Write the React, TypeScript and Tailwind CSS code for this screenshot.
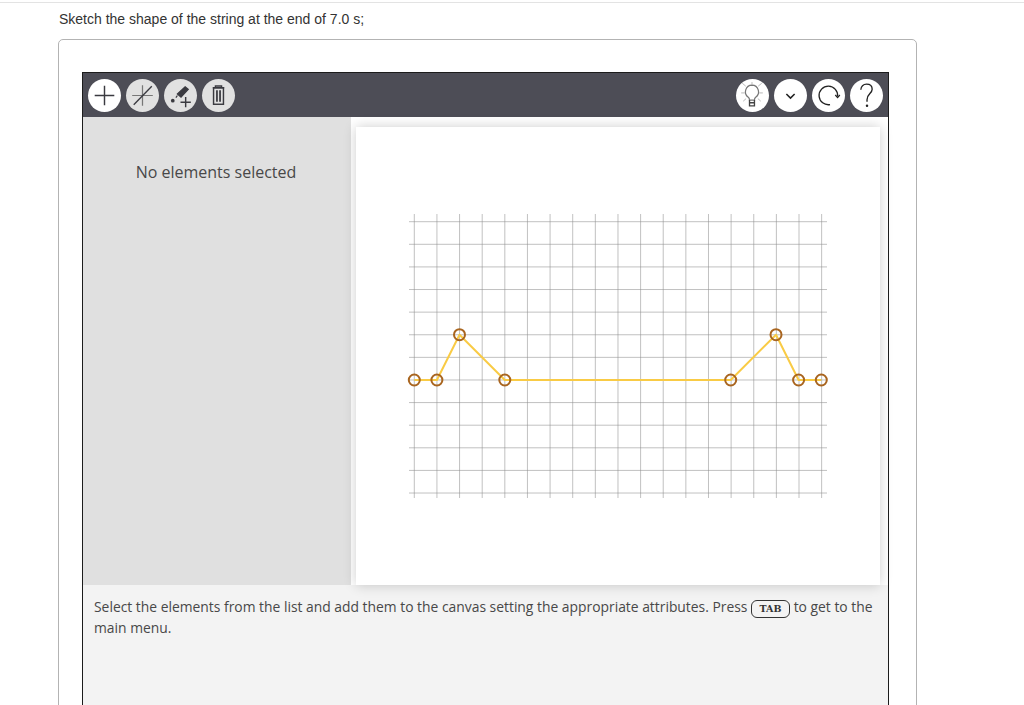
import React from "react";

const xs = Array.from({ length: 19 }, (_, i) => 414.3 + i * 22.63);
const ys = Array.from({ length: 13 }, (_, i) => 221.7 + i * 22.61);
const pts: [number, number][] = [
  [414.3, 380],
  [436.9, 380],
  [459.5, 334.7],
  [504.8, 380],
  [730.7, 380],
  [776, 334.7],
  [798.6, 380],
  [821.3, 380],
];

function Btn({ white, children }: { white?: boolean; children: React.ReactNode }) {
  return (
    <div className={`w-[33px] h-[33px] rounded-full flex items-center justify-center ${white ? "bg-white" : "bg-[#e1e1e1]"}`}>
      <svg width="33" height="33" viewBox="0 0 32 32" fill="none" stroke="#3a3a40" strokeWidth="1.2">
        {children}
      </svg>
    </div>
  );
}

export default function App() {
  return (
    <div className="h-[705px] overflow-hidden bg-white font-['Liberation_Sans',Arial,sans-serif]">
      <div className="mt-[2px] h-[1px] bg-[#e3e3e3]" />
      <div className="pl-[59px] pt-[8px] text-[14px] leading-[16px] text-[#333333]">
        Sketch the shape of the string at the end of 7.0 s;
      </div>
      <div className="ml-[58px] mt-[12px] w-[859px] h-[800px] rounded-t-[5px] border border-[#b3b3b3] pl-[23px] pt-[32px]">
        <div className="w-[807px] border border-[#1c1c1c] bg-[#f3f3f3] h-[700px]">
          <div className="h-[44px] bg-[#4d4d56] flex items-center justify-between pl-[5px] pr-[5px]">
            <div className="flex gap-[5px]">
              <Btn white>
                <path d="M16 6.5V25.5M6.5 16H25.5" strokeWidth="1.4" />
              </Btn>
              <Btn>
                <path d="M16 6V26M6 16H26" stroke="#777" />
                <path d="M7.5 25L25 7" strokeWidth="1.3" />
              </Btn>
              <Btn>
                <path d="M13 14.5L20.5 7.5L23.5 10L16.5 17.5Z" fill="#3a3a40" />
                <circle cx="8.5" cy="21" r="1.8" fill="#3a3a40" stroke="none" />
                <path d="M13 16L11.5 18" />
                <path d="M21 17.5V27.5M16 22.5H26" strokeWidth="1.4" />
              </Btn>
              <Btn>
                <path d="M10.5 8.5H21.5M13 8.5V6.8H19V8.5" strokeWidth="1.3" />
                <rect x="11.2" y="8.5" width="9.6" height="16" strokeWidth="1.4" />
                <path d="M14.5 11V22M17.5 11V22" strokeWidth="1.7" />
              </Btn>
            </div>
            <div className="flex gap-[5px]">
              <Btn white>
                <path d="M15.500 6a6.500 6.500 0 0 0-3.600 11.800c.8.6 1.200 1.300 1.200 2.600h4.800c0-1.300.4-2 1.200-2.600A6.500 6.500 0 0 0 15.500 6Z" stroke="#777" />
                <path d="M13.100 20.400v5.600h4.800v-5.600M13.100 23h4.800" stroke="#444" strokeWidth="1.300" />
                <path d="M15.500 5.500V3M9.500 7L6 4M21.500 7L25 4M8.500 13.500H5M22.500 13.500H26M9.800 19L7 21.500M21.200 19L24 21.500" stroke="#aaaaaa" strokeWidth="0.8" />
              </Btn>
              <Btn white>
                <path d="M12 14.500L16 18.500L20 14.500" strokeWidth="1.500" stroke="#222" />
              </Btn>
              <Btn white>
                <path d="M17.500 24.800A9 9 0 1 1 24.800 17" stroke="#222" strokeWidth="1.300" />
                <path d="M22.600 15.500L24.800 18L27 15.500" stroke="#222" strokeWidth="1.200" />
              </Btn>
              <Btn white>
                <path d="M10.500 10.500C10.500 7 13 5 16 5C19.500 5 21.500 7.200 21.500 10C21.500 14 16.500 14.500 16.500 20V22" stroke="#222" strokeWidth="1.300" />
                <circle cx="16.500" cy="26" r="1.200" fill="#222" stroke="none" />
              </Btn>
            </div>
          </div>
          <div className="flex h-[468px]">
            <div className="w-[268px] shrink-0 bg-[#e0e0e0] text-center pt-[44px] text-[16px] leading-[22px] text-[#484848] font-['Open_Sans',sans-serif] pr-[2px]">
              No elements selected
            </div>
            <div className="flex-1 bg-white pl-[5px] pr-[8px] pt-[10px]">
              <div className="h-[458px] bg-white shadow-[0_0_12px_rgba(0,0,0,0.2)]">
                <svg width="524" height="458" viewBox="356 127 524 458" fill="none">
                  {xs.map((x) => (
                    <line key={x} x1={x} x2={x} y1={214} y2={498} stroke="#8e8e8e" strokeOpacity="0.55" strokeWidth="1" />
                  ))}
                  {ys.map((y) => (
                    <line key={y} x1={409} x2={827} y1={y} y2={y} stroke="#8e8e8e" strokeOpacity="0.55" strokeWidth="1" />
                  ))}
                  <polyline points={pts.map((p) => p.join(",")).join(" ")} stroke="#f9cb45" strokeWidth="2" strokeLinejoin="round" />
                  {pts.map(([x, y]) => (
                    <circle key={x} cx={x} cy={y} r={5.5} stroke="#a9651f" strokeWidth="2" />
                  ))}
                </svg>
              </div>
            </div>
          </div>
          <div className="pl-[11px] pr-[9px] pt-[11px] text-[13.87px] leading-[21px] text-[#484848] font-['Open_Sans',sans-serif]">
            Select the elements from the list and add them to the canvas setting the appropriate attributes. Press{" "}
            <span className="inline-block w-[39px] h-[18px] -my-[4px] align-[0px] rounded-[6px] border border-[#333] text-center text-[9.5px] leading-[16px] font-bold text-[#333] font-['DejaVu_Serif',serif]">TAB</span>{" "}
            to get to the main menu.
          </div>
        </div>
      </div>
    </div>
  );
}
